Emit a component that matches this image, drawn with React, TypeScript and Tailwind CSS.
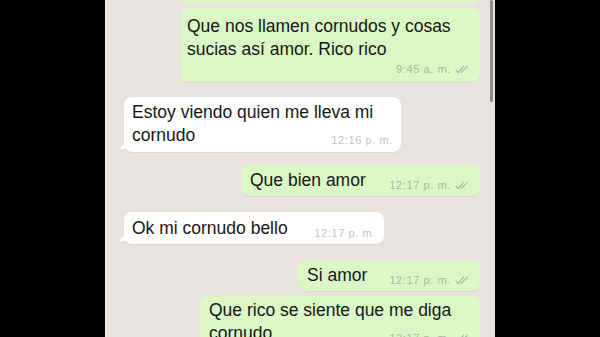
const FONT = "font-['Liberation_Sans','Helvetica',sans-serif]";

function Ticks() {
  return (
    <svg width="14" height="9" viewBox="0 0 14 9" className="ml-[4px] mb-[2px]" fill="none">
      <path d="M1 5.2 L3.2 7.6 L8.6 1.2" stroke="#a4b597" strokeWidth="1.1" strokeLinecap="round" strokeLinejoin="round" />
      <path d="M6.2 7.4 L12.6 1.2" stroke="#a4b597" strokeWidth="1.1" strokeLinecap="round" strokeLinejoin="round" />
    </svg>
  );
}

function Stamp({ time, out }: { time: string; out?: boolean }) {
  return (
    <span
      className={`flex items-end shrink-0 text-[11px] leading-[13px] tracking-[0.6px] whitespace-nowrap ${
        out ? 'text-[#a9b99d]' : 'text-[#c3c3c3]'
      }`}
    >
      {time}
      {out && <Ticks />}
    </span>
  );
}

function Tail() {
  return (
    <span className="absolute left-[-5px] bottom-[3px] w-0 h-0 border-t-[6px] border-t-transparent border-r-[6px] border-r-white" />
  );
}

export default function App() {
  return (
    <div className={`w-[600px] h-[337px] flex bg-black overflow-hidden ${FONT}`}>
      <div className="w-[105px] shrink-0 bg-black" />

      <div className="relative w-[390px] shrink-0 h-full bg-[#e8e3de] overflow-hidden border-l border-[#f1eeea]">
        {/* scrollbar */}
        <div className="absolute right-[2px] top-0 w-[3px] h-[102px] rounded-full bg-[#8e8e8e]" />

        <div className="flex flex-col text-[17.5px] leading-[23px] text-[#161616]">
          {/* cut-off bubble at the top */}
          <div className="self-end mr-[15px] mt-[-36px] w-[299px] h-[40px] rounded-[8px] bg-[#dbf7c6] px-[11px] pb-[6px] flex items-end justify-end">
            <Stamp time="9:44 a. m." out />
          </div>

          <div className="self-end mr-[15px] mt-[4px] w-[299px] rounded-[8px] bg-[#dbf7c6] pl-[6px] pr-[11px] pt-[7px] pb-[6px] shadow-[0_1px_1px_rgba(0,0,0,0.06)]">
            <p>Que nos llamen cornudos y cosas</p>
            <p>sucias así amor. Rico rico</p>
            <div className="mt-[2px] flex justify-end">
              <Stamp time="9:45 a. m." out />
            </div>
          </div>

          <div className="relative self-start ml-[18px] mt-[15px] w-[277px] rounded-[8px] bg-white pl-[8px] pr-[8px] pt-[4px] pb-[5px] shadow-[0_1px_1px_rgba(0,0,0,0.06)]">
            <p>Estoy viendo quien me lleva mi</p>
            <div className="flex items-end justify-between">
              <p>cornudo</p>
              <Stamp time="12:16 p. m." />
            </div>
            <Tail />
          </div>

          <div className="self-end mr-[15px] mt-[13px] w-[238px] rounded-[8px] bg-[#dbf7c6] pl-[8px] pr-[11px] pt-[4px] pb-[4px] flex items-end justify-between shadow-[0_1px_1px_rgba(0,0,0,0.06)]">
            <p>Que bien amor</p>
            <Stamp time="12:17 p. m." out />
          </div>

          <div className="relative self-start ml-[18px] mt-[16px] w-[260px] rounded-[8px] bg-white pl-[8px] pr-[8px] pt-[5px] pb-[4px] flex items-end justify-between shadow-[0_1px_1px_rgba(0,0,0,0.06)]">
            <p>Ok mi cornudo bello</p>
            <Stamp time="12:17 p. m." />
            <Tail />
          </div>

          <div className="self-end mr-[15px] mt-[17px] w-[182px] rounded-[8px] bg-[#dbf7c6] pl-[9px] pr-[11px] pt-[3px] pb-[4px] flex items-end justify-between shadow-[0_1px_1px_rgba(0,0,0,0.06)]">
            <p>Si amor</p>
            <Stamp time="12:17 p. m." out />
          </div>

          <div className="self-end mr-[15px] mt-[5px] w-[280px] rounded-[8px] bg-[#dbf7c6] pl-[9px] pr-[11px] pt-[3px] pb-[4px] shadow-[0_1px_1px_rgba(0,0,0,0.06)]">
            <p>Que rico se siente que me diga</p>
            <div className="flex items-end justify-between">
              <p>cornudo</p>
              <Stamp time="12:17 p. m." out />
            </div>
          </div>
        </div>
      </div>

      <div className="flex-1 bg-black" />
    </div>
  );
}
